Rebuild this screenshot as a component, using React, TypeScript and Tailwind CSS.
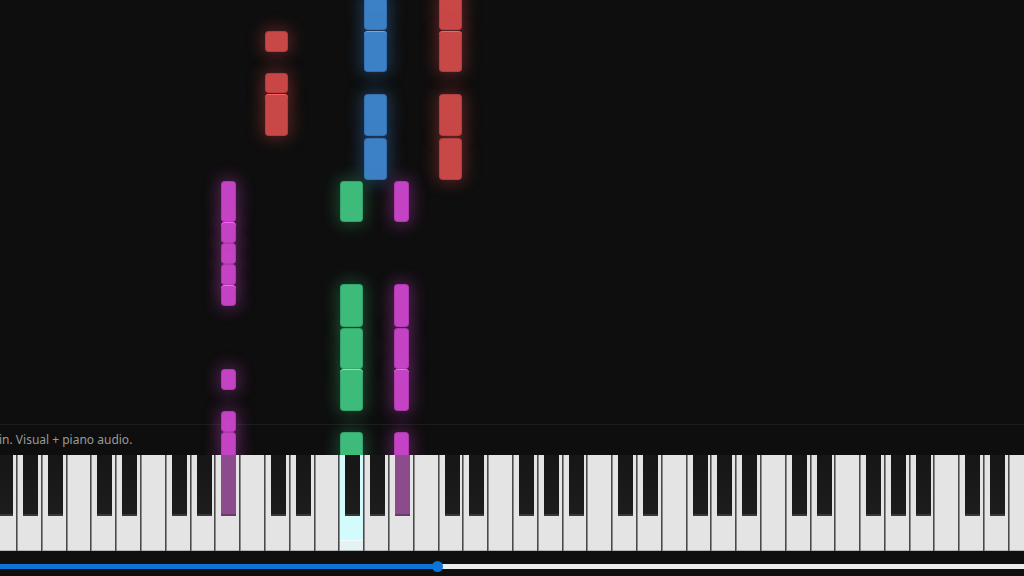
import React from "react";

type Note = { x: number; w: number; top: number; bottom: number; c: string; hl?: boolean };

const COLORS: Record<string, { bg: string; glow: string; hl: string }> = {
  r: { bg: "#c84747", glow: "rgba(220,70,70,0.36)", hl: "#ff6161" },
  b: { bg: "#3c80c5", glow: "rgba(60,130,210,0.36)", hl: "#5cadff" },
  m: { bg: "#c443c4", glow: "rgba(210,70,210,0.36)", hl: "#ff62ff" },
  g: { bg: "#3dbb7a", glow: "rgba(60,200,120,0.3)", hl: "#62ffa8" },
};

const col = (x: number, w: number, c: string, spans: [number, number, boolean?][]): Note[] =>
  spans.map(([top, bottom, hl]) => ({ x, w, top, bottom, c, hl }));

const NOTES: Note[] = [
  ...col(265, 23, "r", [[31, 52], [73, 93], [94, 136, true]]),
  ...col(364, 23, "b", [[-6, 30], [31, 72, true], [94, 136], [138, 180]]),
  ...col(439, 23, "r", [[-6, 30], [31, 72, true], [94, 136], [138, 180]]),
  ...col(220.5, 15, "m", [[181, 222], [222, 243, true], [243, 264], [264, 285], [285, 306, true], [369, 390], [411, 432], [432, 470]]),
  ...col(340, 23, "g", [[181, 222], [284, 327], [328, 369], [369, 411, true], [432, 470]]),
  ...col(394, 15, "m", [[181, 222], [284, 327], [328, 369], [369, 411, true], [432, 470]]),
];

const WHITE_W = 24.8;
const KEYS = Array.from({ length: 42 }, (_, i) => i);
const hasBlack = (i: number) => i % 7 !== 3 && i % 7 !== 6;

function WhiteKey({ i }: { i: number }) {
  const cyan = i === 14;
  const magentaBlack = i === 9 || i === 16;
  return (
    <div
      className={`relative h-full shrink-0 border-l border-[#4a4a4a] shadow-[inset_1px_0_0_#8a8a8a,inset_0_-1px_0_#b5b5b5] ${
        cyan ? "bg-[#d3fbfb]" : "bg-[#e4e4e4]"
      }`}
      style={{ width: WHITE_W }}
    >
      {cyan && <div className="absolute bottom-[1px] left-[1px] right-0 h-[10px] bg-[#e6f2f2] border-t border-[#f4fdfd]" />}
      {hasBlack(i) && (
        <div
          className={`absolute left-[6px] top-0 h-[61px] w-[15px] ${
            magentaBlack
              ? "bg-[#8c4b8c] shadow-[inset_0_-2px_0_#6a3a6a]"
              : "bg-gradient-to-b from-[#161616] to-[#1d1d1d] shadow-[inset_0_-2px_0_#383838]"
          }`}
        />
      )}
    </div>
  );
}

export default function App() {
  return (
    <div
      className="w-[1024px] h-[576px] overflow-hidden bg-[#0e0e0e] flex flex-col"
      style={{ fontFamily: '"Noto Sans", "Open Sans", sans-serif' }}
    >
      <div className="relative h-[455px] shrink-0 overflow-hidden flex flex-col">
        <div className="flex-1" />
        <div className="h-[31px] border-t border-[#1c1c1c] flex items-center text-[12px] text-[#9a9a9a]">
          <span className="-ml-[1px]">in. Visual + piano audio.</span>
        </div>
        {NOTES.map((n, k) => {
          const s = COLORS[n.c];
          return (
            <div
              key={k}
              className="absolute rounded-[4px]"
              style={{
                left: n.x,
                top: n.top,
                width: n.w,
                height: n.bottom - n.top,
                background: s.bg,
                boxShadow: `0 0 16px 3px ${s.glow}${n.hl ? `, inset 0 1px 0 ${s.hl}` : ""}, inset 0 0 0 1px rgba(0,0,0,0.12)`,
              }}
            />
          );
        })}
      </div>
      <div className="h-[96px] shrink-0 overflow-hidden flex bg-[#111]">
        <div className="flex h-full -ml-[8.8px]">
          {KEYS.map((i) => (
            <WhiteKey key={i} i={i} />
          ))}
        </div>
      </div>
      <div className="flex-1 bg-[#0f0f0f] pt-[13px]">
        <div className="relative h-[5px] flex">
          <div className="w-[437px] h-full bg-[#0b74d6]" />
          <div className="flex-1 h-full bg-[#ececec]" />
          <div className="absolute left-[432px] -top-[3px] w-[11px] h-[11px] rounded-full bg-[#0b74d6]" />
        </div>
      </div>
    </div>
  );
}
